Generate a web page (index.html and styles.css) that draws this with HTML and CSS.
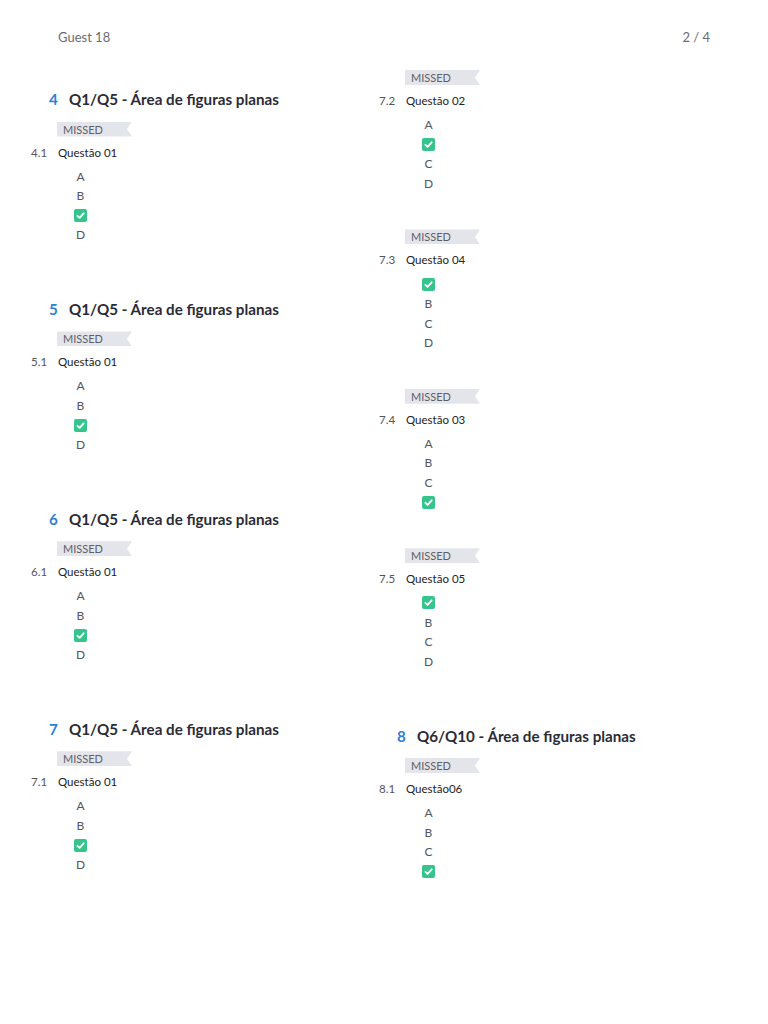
FILE: index.html
```html
<!DOCTYPE html>
<html lang="pt">
<head>
<meta charset="utf-8">
<title>Guest 18</title>
<link rel="stylesheet" href="styles.css">
</head>
<body>
<header class="page-header">
  <span class="guest">Guest 18</span>
  <span class="pager">2 / 4</span>
</header>

<main class="columns">
  <div class="col col-left">
    <section class="section">
      <h2 class="section-title"><span class="section-num">4</span>Q1/Q5 - Área de figuras planas</h2>
      <div class="question">
        <div class="badge">MISSED</div>
        <div class="q-row"><span class="q-num">4.1</span><span class="q-text">Questão 01</span></div>
        <ul class="options">
          <li class="opt">A</li>
          <li class="opt">B</li>
          <li class="opt"><span class="check"><svg viewBox="0 0 13 13" width="13" height="13"><path d="M3.4 6.8 L5.6 8.9 L9.7 4.3" fill="none" stroke="#fff" stroke-width="1.8" stroke-linecap="round" stroke-linejoin="round"/></svg></span></li>
          <li class="opt">D</li>
        </ul>
      </div>
    </section>

    <section class="section">
      <h2 class="section-title"><span class="section-num">5</span>Q1/Q5 - Área de figuras planas</h2>
      <div class="question">
        <div class="badge">MISSED</div>
        <div class="q-row"><span class="q-num">5.1</span><span class="q-text">Questão 01</span></div>
        <ul class="options">
          <li class="opt">A</li>
          <li class="opt">B</li>
          <li class="opt"><span class="check"><svg viewBox="0 0 13 13" width="13" height="13"><path d="M3.4 6.8 L5.6 8.9 L9.7 4.3" fill="none" stroke="#fff" stroke-width="1.8" stroke-linecap="round" stroke-linejoin="round"/></svg></span></li>
          <li class="opt">D</li>
        </ul>
      </div>
    </section>

    <section class="section">
      <h2 class="section-title"><span class="section-num">6</span>Q1/Q5 - Área de figuras planas</h2>
      <div class="question">
        <div class="badge">MISSED</div>
        <div class="q-row"><span class="q-num">6.1</span><span class="q-text">Questão 01</span></div>
        <ul class="options">
          <li class="opt">A</li>
          <li class="opt">B</li>
          <li class="opt"><span class="check"><svg viewBox="0 0 13 13" width="13" height="13"><path d="M3.4 6.8 L5.6 8.9 L9.7 4.3" fill="none" stroke="#fff" stroke-width="1.8" stroke-linecap="round" stroke-linejoin="round"/></svg></span></li>
          <li class="opt">D</li>
        </ul>
      </div>
    </section>

    <section class="section">
      <h2 class="section-title"><span class="section-num">7</span>Q1/Q5 - Área de figuras planas</h2>
      <div class="question">
        <div class="badge">MISSED</div>
        <div class="q-row"><span class="q-num">7.1</span><span class="q-text">Questão 01</span></div>
        <ul class="options">
          <li class="opt">A</li>
          <li class="opt">B</li>
          <li class="opt"><span class="check"><svg viewBox="0 0 13 13" width="13" height="13"><path d="M3.4 6.8 L5.6 8.9 L9.7 4.3" fill="none" stroke="#fff" stroke-width="1.8" stroke-linecap="round" stroke-linejoin="round"/></svg></span></li>
          <li class="opt">D</li>
        </ul>
      </div>
    </section>
  </div>

  <div class="col col-right">
    <div class="question">
      <div class="badge">MISSED</div>
      <div class="q-row"><span class="q-num">7.2</span><span class="q-text">Questão 02</span></div>
      <ul class="options">
        <li class="opt">A</li>
        <li class="opt"><span class="check"><svg viewBox="0 0 13 13" width="13" height="13"><path d="M3.4 6.8 L5.6 8.9 L9.7 4.3" fill="none" stroke="#fff" stroke-width="1.8" stroke-linecap="round" stroke-linejoin="round"/></svg></span></li>
        <li class="opt">C</li>
        <li class="opt">D</li>
      </ul>
    </div>

    <div class="question">
      <div class="badge">MISSED</div>
      <div class="q-row"><span class="q-num">7.3</span><span class="q-text">Questão 04</span></div>
      <ul class="options">
        <li class="opt"><span class="check"><svg viewBox="0 0 13 13" width="13" height="13"><path d="M3.4 6.8 L5.6 8.9 L9.7 4.3" fill="none" stroke="#fff" stroke-width="1.8" stroke-linecap="round" stroke-linejoin="round"/></svg></span></li>
        <li class="opt">B</li>
        <li class="opt">C</li>
        <li class="opt">D</li>
      </ul>
    </div>

    <div class="question">
      <div class="badge">MISSED</div>
      <div class="q-row"><span class="q-num">7.4</span><span class="q-text">Questão 03</span></div>
      <ul class="options">
        <li class="opt">A</li>
        <li class="opt">B</li>
        <li class="opt">C</li>
        <li class="opt"><span class="check"><svg viewBox="0 0 13 13" width="13" height="13"><path d="M3.4 6.8 L5.6 8.9 L9.7 4.3" fill="none" stroke="#fff" stroke-width="1.8" stroke-linecap="round" stroke-linejoin="round"/></svg></span></li>
      </ul>
    </div>

    <div class="question">
      <div class="badge">MISSED</div>
      <div class="q-row"><span class="q-num">7.5</span><span class="q-text">Questão 05</span></div>
      <ul class="options">
        <li class="opt"><span class="check"><svg viewBox="0 0 13 13" width="13" height="13"><path d="M3.4 6.8 L5.6 8.9 L9.7 4.3" fill="none" stroke="#fff" stroke-width="1.8" stroke-linecap="round" stroke-linejoin="round"/></svg></span></li>
        <li class="opt">B</li>
        <li class="opt">C</li>
        <li class="opt">D</li>
      </ul>
    </div>

    <section class="section">
      <h2 class="section-title"><span class="section-num">8</span>Q6/Q10 - Área de figuras planas</h2>
      <div class="question">
        <div class="badge">MISSED</div>
        <div class="q-row"><span class="q-num">8.1</span><span class="q-text">Questão06</span></div>
        <ul class="options">
          <li class="opt">A</li>
          <li class="opt">B</li>
          <li class="opt">C</li>
          <li class="opt"><span class="check"><svg viewBox="0 0 13 13" width="13" height="13"><path d="M3.4 6.8 L5.6 8.9 L9.7 4.3" fill="none" stroke="#fff" stroke-width="1.8" stroke-linecap="round" stroke-linejoin="round"/></svg></span></li>
        </ul>
      </div>
    </section>
  </div>
</main>
</body>
</html>
```

FILE: styles.css
```css
* { box-sizing: border-box; }

html, body {
  margin: 0;
  padding: 0;
  background: #ffffff;
}

body {
  width: 768px;
  height: 1024px;
  font-family: Lato, "Noto Sans", "Liberation Sans", sans-serif;
  color: #2b2b33;
}

.page-header {
  display: flex;
  justify-content: space-between;
  padding: 28px 58px 0 58px;
  height: 46px;
  font-size: 13px;
  line-height: 18px;
  color: #6b6b73;
}

.columns {
  display: flex;
  padding: 24px 0 0 30px;
}

.col {
  width: 348px;
  flex: none;
}

.col-left {
  padding-top: 1px;
}

.section {
  padding-top: 18px;
}

.section-title {
  display: flex;
  margin: 0 0 12.5px 0;
  padding-left: 19px;
  font-size: 15.2px;
  line-height: 20px;
  font-weight: 700;
  color: #2b2b36;
}

.section-num {
  width: 20px;
  flex: none;
  color: #2f80d8;
}

.question {
  margin-bottom: 36px;
}

.badge {
  margin-left: 27px;
  width: 75px;
  height: 15px;
  padding-left: 6px;
  background: #e4e5ea;
  font-size: 11px;
  line-height: 15px;
  color: #5e5e68;
  clip-path: polygon(0 0, 100% 0, calc(100% - 5px) 50%, 100% 100%, 0 100%);
}

.q-row {
  display: flex;
  margin-top: 7px;
  font-size: 11.5px;
  line-height: 18px;
}

.q-num {
  width: 28px;
  flex: none;
  padding-left: 1px;
  color: #55555e;
}

.q-text {
  color: #222228;
}

.options {
  list-style: none;
  margin: 5px 0 0 0;
  padding: 0 0 0 44px;
}

.opt {
  width: 13px;
  height: 19.6px;
  display: flex;
  align-items: center;
  justify-content: center;
  font-size: 12px;
  line-height: 19.6px;
  color: #55555e;
}

.check {
  display: block;
  width: 13px;
  height: 13px;
  border-radius: 2px;
  background: #36c48d;
}

.check svg {
  display: block;
}
```
